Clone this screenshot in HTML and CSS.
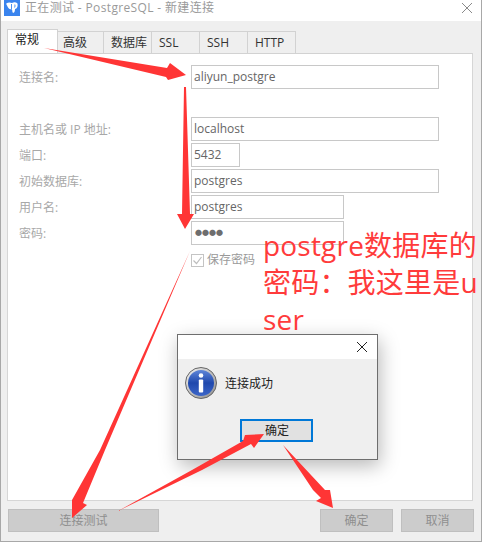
FILE: index.html
```html
<!DOCTYPE html>
<html lang="zh">
<head>
<meta charset="utf-8">
<title>正在测试 - PostgreSQL - 新建连接</title>
<link rel="stylesheet" href="styles.css">
</head>
<body>
<div class="window">
  <header class="titlebar">
    <svg class="app-icon" viewBox="0 0 16 16" aria-hidden="true">
      <rect width="16" height="16" fill="#3a84ee"/>
      <path d="M2.500 3.200C4.500 2 6.600 2.400 8 3c1.600-.8 3.600-1 5.300.2.800 2 .2 4-1 5.300-.6.700-1 .4-1.200 0-.2 1.900-.2 3.600-1.300 4.200-1 .4-1.500-.6-1.500-2 0-1.200-1-1.500-1.500-1.500-1.500.2-2.800-1.500-3.800-3.700C2.300 4.500 2.200 3.700 2.500 3.200z" fill="#fff"/>
      <path d="M7.500 4v5.500M10.800 4.500c.4 1 .3 2-.2 3" stroke="#3a84ee" stroke-width=".9" fill="none"/>
    </svg>
    <span class="title-text">正在测试 - PostgreSQL - 新建连接</span>
    <svg class="close" viewBox="0 0 10 10" aria-hidden="true"><path d="M0 0l10 10M10 0L0 10" stroke="#8a8a8a" fill="none"/></svg>
  </header>
  <div class="content">
    <nav class="tabs">
      <span class="tab active">常规</span>
      <span class="tab tab-narrow">高级</span>
      <span class="tab">数据库</span>
      <span class="tab">SSL</span>
      <span class="tab">SSH</span>
      <span class="tab">HTTP</span>
    </nav>
    <main class="panel">
      <div class="row first"><label>连接名:</label><div class="input full">aliyun_postgre</div></div>
      <div class="row host"><label>主机名或 IP 地址:</label><div class="input full">localhost</div></div>
      <div class="row"><label>端口:</label><div class="input port">5432</div></div>
      <div class="row"><label>初始数据库:</label><div class="input full">postgres</div></div>
      <div class="row"><label>用户名:</label><div class="input mid">postgres</div></div>
      <div class="row"><label>密码:</label><div class="input mid dots">●●●●</div></div>
      <div class="row check-row"><span></span>
        <div class="check">
          <svg class="checkbox" viewBox="0 0 13 13" aria-hidden="true"><rect x=".5" y=".5" width="12" height="12" fill="#fff" stroke="#c4c4c4"/><path d="M2.500 6.500l3 3 5-6.500" stroke="#bdbdbd" stroke-width="1.200" fill="none"/></svg>
          <span>保存密码</span>
        </div>
      </div>
    </main>
    <footer class="actions">
      <button class="btn test">连接测试</button>
      <span class="spacer"></span>
      <button class="btn">确定</button>
      <button class="btn">取消</button>
    </footer>
  </div>
</div>

<section class="dialog">
  <div class="dialog-title">
    <svg class="dialog-close" viewBox="0 0 10 10" aria-hidden="true"><path d="M0 0l10 10M10 0L0 10" stroke="#222" fill="none"/></svg>
  </div>
  <div class="dialog-body">
    <div class="dialog-msg">
      <svg class="info" viewBox="0 0 32 32" aria-hidden="true">
        <defs>
          <linearGradient id="ring" x1="0" y1="0" x2="1" y2="1"><stop offset="0" stop-color="#f4f4f4"/><stop offset="1" stop-color="#8c8c8c"/></linearGradient>
          <linearGradient id="blue" x1="0" y1="0" x2="0" y2="1"><stop offset="0" stop-color="#5f86d8"/><stop offset=".5" stop-color="#1f48ad"/><stop offset="1" stop-color="#3c66c8"/></linearGradient>
        </defs>
        <circle cx="16" cy="16" r="15.500" fill="url(#ring)" stroke="#666" stroke-width="1"/>
        <circle cx="16" cy="16" r="13" fill="url(#blue)"/>
        <circle cx="16" cy="8.500" r="2.300" fill="#fff"/>
        <rect x="13.800" y="12.500" width="4.400" height="13" rx="1" fill="#fff"/>
      </svg>
      <span class="dialog-text">连接成功</span>
    </div>
    <div class="dialog-actions"><button class="ok">确定</button></div>
  </div>
</section>

<svg class="arrows" viewBox="0 0 483 543" aria-hidden="true">
  <path d="M44 48L167 68L170 63L186 75L168 80L166 77z"/>
  <path d="M184 87H186L190 214H194L185 229L177 214H182z"/>
  <path d="M190 251L105 450L83 503L87 505L72 518L72 500L100 450z"/>
  <path d="M118 511L192 470L243 441L245 435L264 434L254 448L251 444L202 470z"/>
  <path d="M283 445L325 490L330 490L333 508L316 501L321 498L313 490z"/>
</svg>
<p class="note">postgre数据库的<br>密码：我这里是u<br>ser</p>
</body>
</html>
```
FILE: styles.css
```css
* { box-sizing: border-box; }
html, body { margin: 0; padding: 0; }
body {
  width: 483px;
  height: 543px;
  background: #fff;
  position: relative;
  overflow: hidden;
  font: 12px/16px "Open Sans", "Noto Sans CJK SC", sans-serif;
  color: #333;
}
.window {
  width: 482px;
  height: 542px;
  border: 1px solid #a8a8a8;
  border-width: 0 1px 1px 1px;
  display: flex;
  flex-direction: column;
}
.titlebar {
  height: 21px;
  background: #fff;
  display: flex;
  align-items: flex-start;
  padding: 0 9px 0 3px;
  gap: 5px;
}
.app-icon { width: 16px; height: 16px; }
.title-text { flex: 1; color: #9a9a9a; font-size: 12px; letter-spacing: .35px; }
.close { width: 10px; height: 10px; margin-top: 3px; }
.content {
  flex: 1;
  background: #efefef;
  padding: 8px 8px 9px 6px;
  display: flex;
  flex-direction: column;
}
.tabs { display: flex; height: 24px; align-items: flex-end; }
.tab {
  width: 48px;
  height: 22px;
  border: 1px solid #d2d2d2;
  border-left-width: 0;
  border-bottom-width: 0;
  padding-left: 7px;
  line-height: 21px;
  color: #333;
}
.tab.active {
  width: 51px;
  height: 24px;
  background: #fff;
  border-left-width: 1px;
  line-height: 20px;
  color: #222;
}
.tab.tab-narrow { width: 46px; padding-left: 5px; }
.panel {
  flex: 1;
  background: #fff;
  border: 1px solid #d6d6d6;
  border-top: 1px solid #d2d2d2;
  padding: 11px 0 0 11px;
  display: flex;
  flex-direction: column;
  gap: 2px;
}
.row {
  display: grid;
  grid-template-columns: 172px 1fr;
  align-items: center;
  height: 24px;
}
.row.host { margin-top: 26px; }
.row label { color: #a8a8a8; padding-top: 2px; }
.input {
  height: 24px;
  border: 1px solid #c8c8c8;
  background: #fff;
  padding-left: 2px;
  line-height: 21px;
  color: #666;
}
.input.full { width: 248px; }
.input.mid { width: 153px; }
.input.port { width: 49px; }
.input.dots { font-size: 7px; color: #6e6e6e; line-height: 22px; padding-left: 3px; }
.check-row { margin-top: 2px; height: 22px; }
.check { display: flex; align-items: center; gap: 3px; color: #9a9a9a; }
.checkbox { width: 13px; height: 13px; }
.actions { display: flex; gap: 8px; margin: 8px -1px 0 0; height: 23px; padding-left: 1px; }
.spacer { flex: 1; }
.btn {
  width: 73px;
  height: 23px;
  padding: 0;
  border: 1px solid #bfbfbf;
  background: #cccccc;
  color: #8f8f8f;
  font: inherit;
}
.btn.test { width: 151px; }
.dialog {
  position: absolute;
  left: 177px;
  top: 334px;
  width: 201px;
  height: 126px;
  border: 1px solid #6e6e6e;
  background: #efefef;
  box-shadow: 2px 6px 18px rgba(0, 0, 0, .28);
  display: flex;
  flex-direction: column;
}
.dialog-title {
  height: 24px;
  background: #fff;
  display: flex;
  align-items: center;
  justify-content: flex-end;
  padding-right: 10px;
}
.dialog-close { width: 10px; height: 10px; }
.dialog-body { flex: 1; display: flex; flex-direction: column; padding: 8px 8px 0 7px; }
.dialog-msg { display: flex; align-items: center; gap: 8px; color: #222; }
.dialog-text { padding-top: 2px; }
.info { width: 32px; height: 32px; }
.dialog-actions { display: flex; margin-top: 20px; padding-left: 55px; }
.ok {
  width: 73px;
  height: 23px;
  padding: 0 0 0 1px;
  border: 2px solid #0078d7;
  background: #e1e1e1;
  color: #222;
  font: inherit;
}
.arrows {
  position: absolute;
  left: 0;
  top: 0;
  width: 483px;
  height: 543px;
  pointer-events: none;
}
.arrows path { fill: #ff3535; }
.note {
  position: absolute;
  left: 263px;
  top: 227px;
  margin: 0;
  font-size: 28px;
  line-height: 37px;
  color: #ff3b3b;
  white-space: nowrap;
  letter-spacing: .2px;
}
```
